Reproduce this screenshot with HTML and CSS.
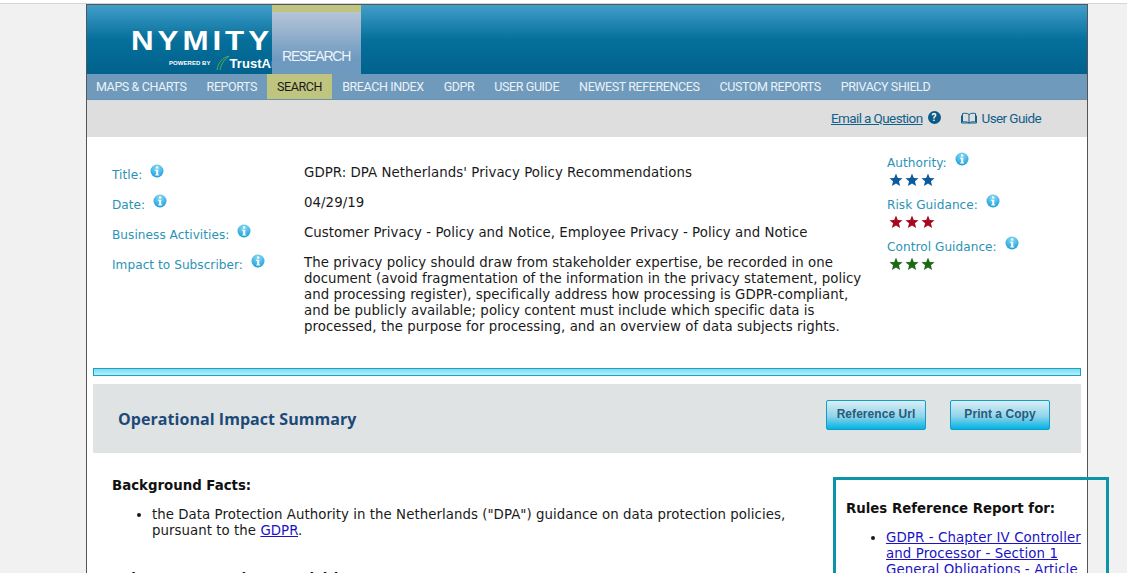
FILE: index.html
```html
<!DOCTYPE html>
<html>
<head>
    <meta charset="UTF-8" />
    <title>GDPR: DPA Netherlands' Privacy Policy Recommendations</title>
    <link rel="stylesheet" href="styles.css">
</head>
<body>
    <svg class="defs" width="0" height="0">
        <defs>
            <radialGradient id="infoFill" cx="50%" cy="25%" r="80%">
                <stop offset="0" stop-color="#8fdcf5" />
                <stop offset="1" stop-color="#0f9ad8" />
            </radialGradient>
            <symbol id="info" viewBox="0 0 14 14">
                <circle cx="7" cy="7" r="6.5" fill="url(#infoFill)" />
                <rect x="6" y="2.500" width="2.200" height="2" fill="#fff" />
                <path d="M5.200 5.800h3v4.600h1v1.200H5.200v-1.200h1V7H5.200z" fill="#fff" />
            </symbol>
            <symbol id="star" viewBox="0 0 14 14">
                <polygon points="7,0.5 8.8,5 13.6,5.2 9.9,8.3 11.1,13 7,10.4 2.9,13 4.1,8.3 0.4,5.2 5.2,5" />
            </symbol>
        </defs>
    </svg>

    <div class="topline"></div>

    <div class="wrapper">
        <div class="banner">
            <div class="logo">
                <div class="logo-name">NYMITY</div>
                <div class="logo-sub">
                    <span class="powered">POWERED BY</span>
                    <svg class="arc" width="14" height="16" viewBox="0 0 14 16">
                        <path d="M1 15C2 8 6 3 13 1C8 5 5 9 4 15" fill="none" stroke="#4caf50" stroke-width="1" />
                    </svg>
                    <span class="trustarc">TrustArc</span>
                </div>
            </div>
            <div class="research-tab">RESEARCH</div>
        </div>

        <nav class="mainnav">
            <a href="#">MAPS &amp; CHARTS</a>
            <a href="#">REPORTS</a>
            <a href="#" class="active">SEARCH</a>
            <a href="#">BREACH INDEX</a>
            <a href="#">GDPR</a>
            <a href="#">USER GUIDE</a>
            <a href="#">NEWEST REFERENCES</a>
            <a href="#">CUSTOM REPORTS</a>
            <a href="#">PRIVACY SHIELD</a>
        </nav>

        <div class="toolbar">
            <a href="#" class="email-link">Email a Question</a>
            <span class="help-icon">?</span>
            <svg class="book" width="16" height="12" viewBox="0 0 16 12">
                <path d="M8 2.500C6.500 1.200 4 1 1.500 1.500V10C4 9.500 6.500 9.700 8 11C9.500 9.700 12 9.500 14.500 10V1.500C12 1 9.500 1.200 8 2.500V11M0.500 3.500V11H15.500V3.500" fill="none" stroke="#11618a" stroke-width="1" />
            </svg>
            <span class="guide-link">User Guide</span>
        </div>

        <div class="details">
            <div class="fields">
                <div class="field">
                    <div class="label">Title: <svg class="info"><use href="#info" /></svg></div>
                    <div class="value">GDPR: DPA Netherlands' Privacy Policy Recommendations</div>
                </div>
                <div class="field">
                    <div class="label">Date: <svg class="info"><use href="#info" /></svg></div>
                    <div class="value">04/29/19</div>
                </div>
                <div class="field">
                    <div class="label">Business Activities: <svg class="info"><use href="#info" /></svg></div>
                    <div class="value">Customer Privacy - Policy and Notice, Employee Privacy - Policy and Notice</div>
                </div>
                <div class="field">
                    <div class="label">Impact to Subscriber: <svg class="info"><use href="#info" /></svg></div>
                    <div class="value">The privacy policy should draw from stakeholder expertise, be recorded in one document (avoid fragmentation of the information in the privacy statement, policy and processing register), specifically address how processing is GDPR-compliant, and be publicly available; policy content must include which specific data is processed, the purpose for processing, and an overview of data subjects rights.</div>
                </div>
            </div>
            <div class="ratings">
                <div class="rating">
                    <div class="label">Authority: <svg class="info"><use href="#info" /></svg></div>
                    <div class="stars blue">
                        <svg><use href="#star" /></svg><svg><use href="#star" /></svg><svg><use href="#star" /></svg>
                    </div>
                </div>
                <div class="rating">
                    <div class="label">Risk Guidance: <svg class="info"><use href="#info" /></svg></div>
                    <div class="stars red">
                        <svg><use href="#star" /></svg><svg><use href="#star" /></svg><svg><use href="#star" /></svg>
                    </div>
                </div>
                <div class="rating">
                    <div class="label">Control Guidance: <svg class="info"><use href="#info" /></svg></div>
                    <div class="stars green">
                        <svg><use href="#star" /></svg><svg><use href="#star" /></svg><svg><use href="#star" /></svg>
                    </div>
                </div>
            </div>
        </div>

        <div class="divider"></div>

        <div class="summary-bar">
            <h2>Operational Impact Summary</h2>
            <div class="buttons">
                <a href="#" class="btn">Reference Url</a>
                <a href="#" class="btn">Print a Copy</a>
            </div>
        </div>

        <div class="report">
            <div class="report-main">
                <h4>Background Facts:</h4>
                <ul>
                    <li>the Data Protection Authority in the Netherlands ("DPA") guidance on data protection policies, pursuant to the <a href="#">GDPR</a>.</li>
                </ul>
                <h4 class="next-heading">Relevance to Business Activities:</h4>
            </div>
            <div class="rules-box">
                <h4>Rules Reference Report for:</h4>
                <ul>
                    <li><a href="#">GDPR - Chapter IV Controller and Processor - Section 1 General Obligations - Article 24</a></li>
                </ul>
            </div>
        </div>
    </div>
</body>
</html>
```

FILE: styles.css
```css
html, body {
    height: 100%;
    overflow: hidden;
}
body {
    margin: 0;
    background: #f1f1f1;
    font-family: "DejaVu Sans", Verdana, sans-serif;
    font-size: 13.33px;
    line-height: 16px;
    letter-spacing: 0.05px;
    color: #1a1a1a;
}
.defs {
    display: block;
    height: 0;
}
.topline {
    height: 3px;
    background: #fff;
    border-bottom: 1px solid #d4d4d4;
}
.wrapper {
    width: 1000px;
    margin-left: 86px;
    border-left: 1px solid #555;
    border-right: 1px solid #555;
    border-top: 1px solid #555;
    background: #fff;
    height: 900px;
}

/* banner */
.banner {
    display: flex;
    height: 69px;
    background: linear-gradient(#419fca, #066f9b 50%, #00628d);
}
.logo {
    width: 141px;
    margin-left: 44px;
    padding-top: 23px;
    overflow: hidden;
    white-space: nowrap;
}
.logo-name {
    font-family: "Liberation Sans", sans-serif;
    font-size: 28px;
    font-weight: bold;
    line-height: 25px;
    letter-spacing: 3.5px;
    color: #fff;
    transform: scaleX(1.12);
    transform-origin: left;
}
.logo-sub {
    display: flex;
    align-items: flex-end;
    margin-left: 38px;
    height: 18px;
}
.powered {
    font-family: "Liberation Sans", sans-serif;
    font-size: 6px;
    line-height: 10px;
    font-weight: bold;
    color: #fff;
    margin: 0 5px 3px 0;
}
.arc {
    flex: none;
}
.trustarc {
    font-family: "Liberation Sans", sans-serif;
    font-size: 13px;
    line-height: 15px;
    font-weight: bold;
    color: #fff;
}
.research-tab {
    width: 89px;
    box-sizing: border-box;
    border-top: 7px solid #bfc47f;
    padding: 36px 0 0 10px;
    background: linear-gradient(#b5c5d8, #6f9ac0 75%);
    font-family: "Liberation Sans", sans-serif;
    font-size: 14px;
    letter-spacing: -1.2px;
    color: #edf3f8;
}

/* nav */
.mainnav {
    display: flex;
    height: 26px;
    background: #6f9abb;
    border-bottom: 1px solid #6a93b2;
    box-sizing: border-box;
}
.mainnav a {
    padding: 0 10px;
    font-family: Roboto, sans-serif;
    font-size: 12.5px;
    line-height: 25px;
    letter-spacing: -0.4px;
    color: #eaf2f8;
    text-decoration: none;
}
.mainnav a:first-child {
    padding-left: 9px;
}
.mainnav a.active {
    background: #bfc47f;
    color: #1a1a1a;
}

/* toolbar */
.toolbar {
    display: flex;
    align-items: center;
    justify-content: flex-end;
    height: 37px;
    padding-right: 46px;
    background: #dedede;
    font-family: Roboto, sans-serif;
    font-size: 13.5px;
    letter-spacing: -0.6px;
    color: #11618a;
}
.email-link {
    color: #11618a;
    margin-top: -2px;
}
.guide-link {
    margin-top: -2px;
}
.help-icon {
    width: 13px;
    height: 13px;
    margin: -2px 20px 0 5px;
    border-radius: 50%;
    background: #0c5a85;
    color: #fff;
    font-size: 10px;
    line-height: 13px;
    font-weight: bold;
    text-align: center;
    letter-spacing: 0;
}
.book {
    margin: -1px 5px 0 0;
}

/* details */
.details {
    display: flex;
    height: 231px;
    box-sizing: border-box;
    padding: 27px 0 0 25px;
}
.fields {
    width: 775px;
}
.field {
    display: flex;
    min-height: 30px;
}
.label {
    flex: none;
    color: #2a93b5;
    font-size: 12.1px;
}
.field .label {
    width: 192px;
    height: 16px;
}
.value {
    flex: none;
    width: 560px;
    padding-top: 1px;
}
.info {
    width: 14px;
    height: 14px;
    margin-left: 4px;
    vertical-align: 1px;
}
.ratings {
    margin-top: -12px;
}
.rating {
    height: 42px;
}
.rating .label {
    height: 16px;
}
.stars {
    display: flex;
    gap: 2px;
    padding-left: 2px;
    margin-top: 5px;
}
.stars svg {
    width: 14px;
    height: 14px;
}
.stars.blue { fill: #0a5a9c; }
.stars.red { fill: #a50a1e; }
.stars.green { fill: #1f6a14; }

/* summary */
.divider {
    height: 6px;
    margin: 0 6px;
    border: 1px solid #16a5c4;
    background: linear-gradient(#7fdcf0, #b4eefa);
}
.summary-bar {
    display: flex;
    align-items: center;
    justify-content: space-between;
    height: 69px;
    margin: 8px 6px 0;
    padding: 0 31px 0 25px;
    background: #e0e3e4;
}
.summary-bar h2 {
    margin: 0;
    font-family: "Open Sans", sans-serif;
    font-size: 16px;
    font-weight: bold;
    color: #1c4a78;
}
.buttons {
    display: flex;
    gap: 24px;
    margin-bottom: 8px;
}
.btn {
    display: block;
    box-sizing: border-box;
    width: 100px;
    height: 30px;
    border: 1px solid #0f9fc4;
    border-radius: 2px;
    background: linear-gradient(#d9eef5, #8fd4ea 55%, #00b3e4);
    font-family: "Liberation Sans", sans-serif;
    font-size: 12px;
    font-weight: bold;
    line-height: 27px;
    text-align: center;
    color: #2a5a78;
    text-decoration: none;
}

/* report */
.report {
    display: flex;
    align-items: flex-start;
}
.report-main {
    width: 722px;
    padding: 25px 0 0 25px;
}
.report h4 {
    margin: 0;
    font-size: 13.33px;
    letter-spacing: 0;
    color: #111;
}
.report ul {
    margin: 13px 0 0;
    padding-left: 40px;
}
.report a {
    color: #2012c4;
}
.next-heading {
    padding-top: 32px;
}
.rules-box {
    flex: none;
    box-sizing: border-box;
    width: 276px;
    margin: 24px -22px 0 0;
    padding: 21px 14px 20px 10px;
    border: 3px solid #0e94a8;
    letter-spacing: 0.12px;
}
```
